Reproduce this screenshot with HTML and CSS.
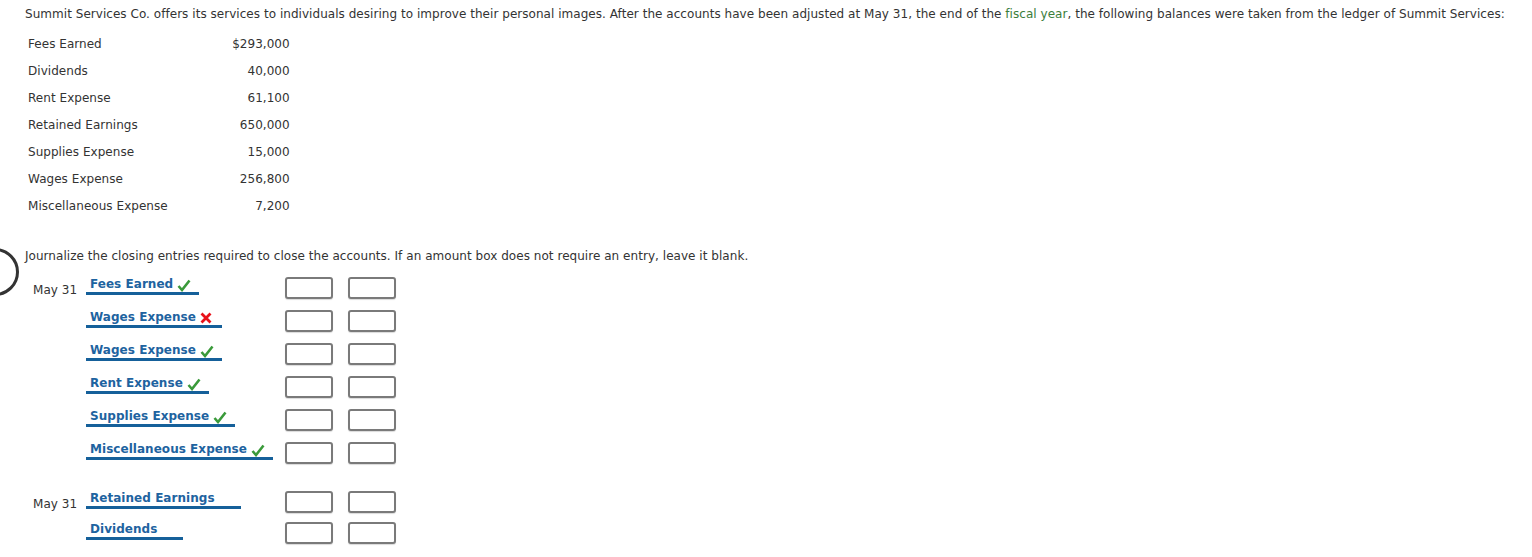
FILE: index.html
```html
<!DOCTYPE html>
<html>
<head>
<meta charset="utf-8">
<link rel="stylesheet" href="styles.css">
</head>
<body>
<div class="page">
  <p class="intro">Summit Services Co. offers its services to individuals desiring to improve their personal images. After the accounts have been adjusted at May 31, the end of the <span class="term">fiscal year</span>, the following balances were taken from the ledger of Summit Services:</p>
  <table class="ledger">
    <tr><td class="lbl">Fees Earned</td><td class="amt">$293,000</td></tr>
    <tr><td class="lbl">Dividends</td><td class="amt">40,000</td></tr>
    <tr><td class="lbl">Rent Expense</td><td class="amt">61,100</td></tr>
    <tr><td class="lbl">Retained Earnings</td><td class="amt">650,000</td></tr>
    <tr><td class="lbl">Supplies Expense</td><td class="amt">15,000</td></tr>
    <tr><td class="lbl">Wages Expense</td><td class="amt">256,800</td></tr>
    <tr><td class="lbl">Miscellaneous Expense</td><td class="amt">7,200</td></tr>
  </table>

  <div class="question">
    <span class="ring"></span>
    <p class="instr">Journalize the closing entries required to close the accounts. If an amount box does not require an entry, leave it blank.</p>

    <div class="journal">
      <div class="entry">
        <div class="jrow">
          <span class="date">May 31</span>
          <span class="acct-cell"><span class="acct">Fees Earned<span class="mark"><svg class="chk" width="14" height="13" viewBox="0 0 14 13"><path d="M1.5 7 L5 11 L12.5 1.5" fill="none" stroke="#3a9a3a" stroke-width="2.6"/></svg></span></span></span>
          <span class="box"></span><span class="box"></span>
        </div>
        <div class="jrow">
          <span class="date"></span>
          <span class="acct-cell"><span class="acct">Wages Expense<span class="mark"><svg class="xm" width="12" height="12" viewBox="0 0 12 12"><path d="M1.5 1.5 L10.5 10.5 M10.5 1.5 L1.5 10.5" fill="none" stroke="#e8121a" stroke-width="2.8"/></svg></span></span></span>
          <span class="box"></span><span class="box"></span>
        </div>
        <div class="jrow">
          <span class="date"></span>
          <span class="acct-cell"><span class="acct">Wages Expense<span class="mark"><svg class="chk" width="14" height="13" viewBox="0 0 14 13"><path d="M1.5 7 L5 11 L12.5 1.5" fill="none" stroke="#3a9a3a" stroke-width="2.6"/></svg></span></span></span>
          <span class="box"></span><span class="box"></span>
        </div>
        <div class="jrow">
          <span class="date"></span>
          <span class="acct-cell"><span class="acct">Rent Expense<span class="mark"><svg class="chk" width="14" height="13" viewBox="0 0 14 13"><path d="M1.5 7 L5 11 L12.5 1.5" fill="none" stroke="#3a9a3a" stroke-width="2.6"/></svg></span></span></span>
          <span class="box"></span><span class="box"></span>
        </div>
        <div class="jrow">
          <span class="date"></span>
          <span class="acct-cell"><span class="acct">Supplies Expense<span class="mark"><svg class="chk" width="14" height="13" viewBox="0 0 14 13"><path d="M1.5 7 L5 11 L12.5 1.5" fill="none" stroke="#3a9a3a" stroke-width="2.6"/></svg></span></span></span>
          <span class="box"></span><span class="box"></span>
        </div>
        <div class="jrow">
          <span class="date"></span>
          <span class="acct-cell"><span class="acct">Miscellaneous Expense<span class="mark"><svg class="chk" width="14" height="13" viewBox="0 0 14 13"><path d="M1.5 7 L5 11 L12.5 1.5" fill="none" stroke="#3a9a3a" stroke-width="2.6"/></svg></span></span></span>
          <span class="box"></span><span class="box"></span>
        </div>
      </div>
      <div class="entry second">
        <div class="jrow tight">
          <span class="date">May 31</span>
          <span class="acct-cell"><span class="acct">Retained Earnings<span class="mark"></span></span></span>
          <span class="box"></span><span class="box"></span>
        </div>
        <div class="jrow">
          <span class="date"></span>
          <span class="acct-cell"><span class="acct">Dividends<span class="mark"></span></span></span>
          <span class="box"></span><span class="box"></span>
        </div>
      </div>
    </div>
  </div>
</div>
</body>
</html>
```

FILE: styles.css
```css
html, body {
  margin: 0;
  padding: 0;
  background: #fff;
}
body {
  font-family: "DejaVu Sans", Verdana, sans-serif;
  font-size: 12px;
  letter-spacing: 0.04px;
  color: #333;
}
.page {
  padding: 7px 0 0 25px;
  position: relative;
}
.intro {
  margin: 0;
  line-height: 15px;
  white-space: nowrap;
}
.term {
  color: #3b7d3b;
}
.ledger {
  border-collapse: collapse;
  margin: 15px 0 0 3px;
}
.ledger td {
  padding: 0;
  height: 27px;
  line-height: 15px;
  vertical-align: top;
}
.ledger .amt {
  text-align: right;
  padding-left: 40px;
  width: 82px;
}
.question {
  margin-top: 23px;
}
.ring {
  position: absolute;
  left: -29px;
  top: 248px;
  width: 42px;
  height: 42px;
  border: 3px solid #333;
  border-radius: 50%;
}
.instr {
  margin: 0;
  line-height: 15px;
}
.journal {
  margin-top: 13px;
  margin-left: 8px;
}
.jrow {
  display: flex;
  align-items: flex-start;
  height: 33px;
}
.date {
  width: 53px;
  flex: none;
  padding-top: 6px;
  line-height: 15px;
}
.acct-cell {
  width: 199px;
  flex: none;
}
.acct {
  display: inline-block;
  font-weight: bold;
  font-size: 12px;
  color: #1e63a0;
  padding: 0 0 0 4px;
  line-height: 15px;
  border-bottom: 3px solid #15609a;
}
.mark {
  display: inline-block;
  width: 26px;
  height: 15px;
  vertical-align: top;
  position: relative;
}
.mark svg {
  position: absolute;
  left: 4px;
  top: 2px;
}
.mark svg.xm {
  left: 4px;
  top: 2px;
}
.box {
  flex: none;
  width: 44px;
  height: 18px;
  border: 2px solid #7a7a7a;
  border-radius: 3px;
  margin-right: 15px;
  box-shadow: 0 1px 1px rgba(0,0,0,0.15);
  background: #fff;
}
.entry.second {
  margin-top: 16px;
}
.jrow.tight {
  height: 31px;
}
```
